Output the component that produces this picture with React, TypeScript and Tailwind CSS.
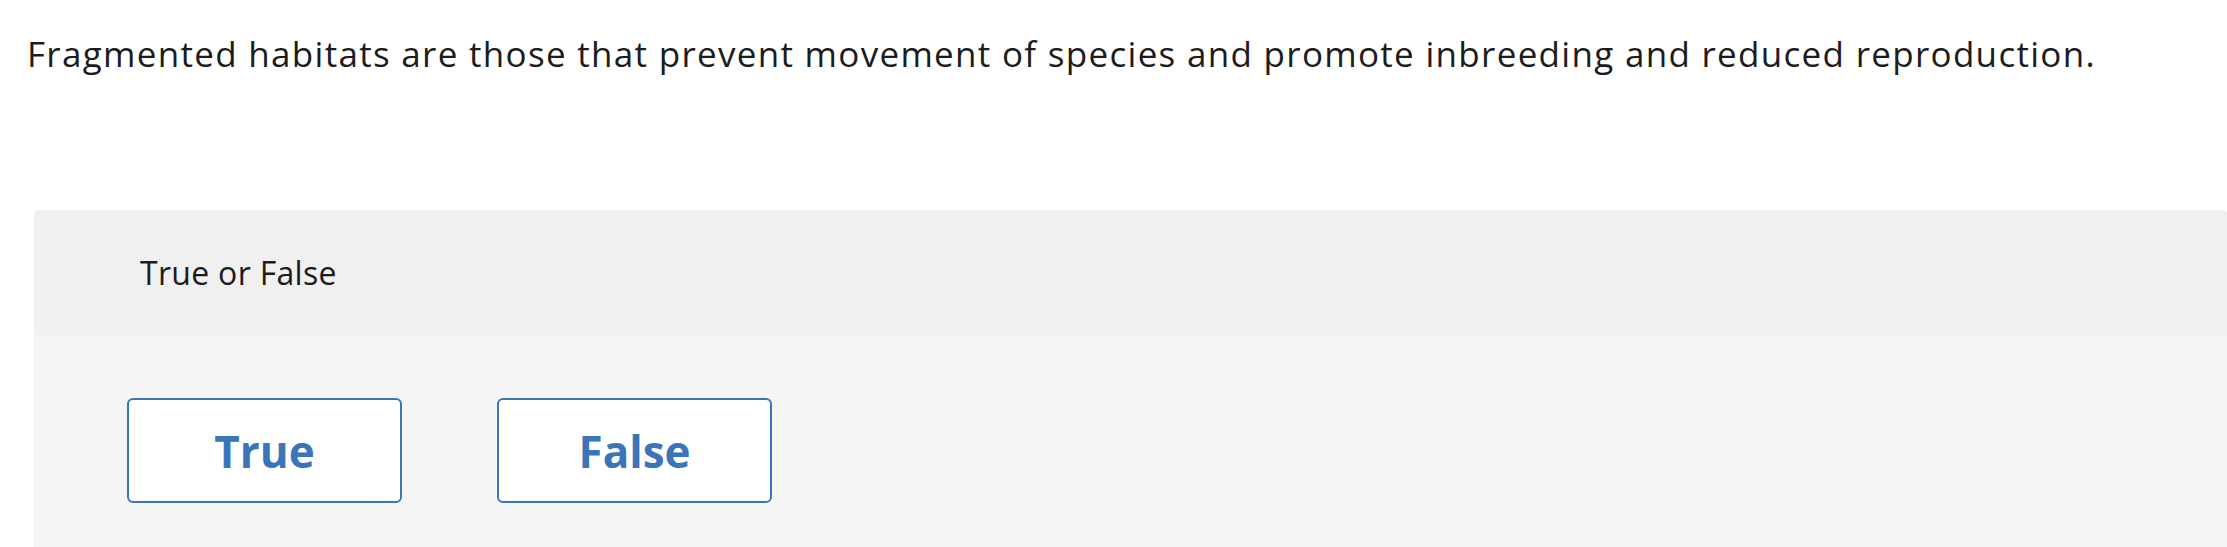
export default function App() {
  return (
    <div className="min-h-screen bg-white font-['Open_Sans',sans-serif] text-[#1c1c1c]">
      <p className="pl-[27px] pt-[30px] text-[35px] leading-[48px] tracking-[1.3px] whitespace-nowrap">
        Fragmented habitats are those that prevent movement of species and promote inbreeding and reduced reproduction.
      </p>
      <div className="ml-[34px] mt-[132px] rounded-t-[5px] bg-[#f5f5f5] overflow-hidden">
        <div className="h-[125px] bg-[#f0f0f0] pl-[106px] flex items-center text-[32px] tracking-[0.3px]">
          True or False
        </div>
        <div className="flex gap-[95px] pl-[93px] pt-[63px] pb-[44px]">
          <button className="w-[275px] h-[105px] rounded-[6px] border-2 border-[#3a75b9] bg-white text-[#3a75b9] text-[44px] font-bold">
            True
          </button>
          <button className="w-[275px] h-[105px] rounded-[6px] border-2 border-[#3a75b9] bg-white text-[#3a75b9] text-[44px] font-bold">
            False
          </button>
        </div>
      </div>
    </div>
  );
}
